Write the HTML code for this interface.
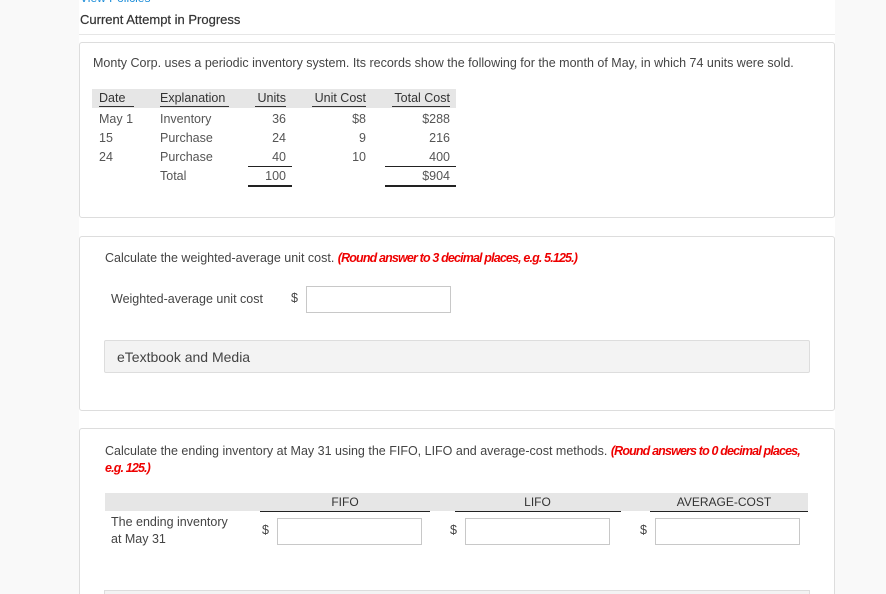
<!DOCTYPE html>
<html><head><style>
html,body{margin:0;width:886px;height:594px;overflow:hidden}
body{background:#f9f9f9;font-family:"Liberation Sans",sans-serif;color:#333;position:relative}
.a{position:absolute;white-space:nowrap}
.main{position:absolute;left:79px;top:0;width:756px;height:594px;background:#fff}
.box{position:absolute;border:1px solid #ddd;border-radius:3px;background:#fff}
.t12{font-size:12.5px;letter-spacing:0}
.t11{font-size:12px;letter-spacing:0}
.red{color:#e00;font-style:italic;font-weight:bold;letter-spacing:-0.85px}
.inp{position:absolute;border:1px solid #c8c8c8;background:#fff}
.r{text-align:right}
.hl{position:absolute;height:2px;background:#222}
</style></head><body>
<div class="main"></div>
<div class="a" style="left:80px;top:-9px;font-size:12px;color:#1a8cd8">View Policies</div>
<div class="a" style="left:80px;top:12px;font-size:13px;color:#333;-webkit-text-stroke:0.2px #333">Current Attempt in Progress</div>
<div class="a" style="left:79px;top:34px;width:756px;height:1px;background:#e6e6e6"></div>

<div class="box" style="left:79px;top:42px;width:754px;height:174px"></div>
<div class="a t12" style="left:93px;top:56px;color:#444">Monty Corp. uses a periodic inventory system. Its records show the following for the month of May, in which 74 units were sold.</div>
<div class="a" style="left:92px;top:89px;width:364px;height:19px;background:#e6e6e6"></div>
<div class="a t12" style="left:99px;top:91px">Date</div>
<div class="a t12" style="left:160px;top:91px">Explanation</div>
<div class="a t12 r" style="left:236px;top:91px;width:50px">Units</div>
<div class="a t12 r" style="left:296px;top:91px;width:70px">Unit Cost</div>
<div class="a t12 r" style="left:376px;top:91px;width:74px">Total Cost</div>
<div class="a" style="left:99px;top:106px;width:35px;height:1px;background:#333"></div>
<div class="a" style="left:160px;top:106px;width:69px;height:1px;background:#333"></div>
<div class="a" style="left:255px;top:106px;width:31px;height:1px;background:#333"></div>
<div class="a" style="left:312px;top:106px;width:54px;height:1px;background:#333"></div>
<div class="a" style="left:392px;top:106px;width:58px;height:1px;background:#333"></div>
<div class="a t12" style="left:99px;top:110px;line-height:19px;color:#555">May 1<br>15<br>24</div>
<div class="a t12" style="left:160px;top:110px;line-height:19px;color:#555">Inventory<br>Purchase<br>Purchase</div>
<div class="a t12 r" style="left:236px;top:110px;width:50px;line-height:19px;color:#555">36<br>24<br>40</div>
<div class="a t12 r" style="left:296px;top:110px;width:70px;line-height:19px;color:#555">$8<br>9<br>10</div>
<div class="a t12 r" style="left:376px;top:110px;width:74px;line-height:19px;color:#555">$288<br>216<br>400</div>
<div class="a" style="left:248px;top:166px;width:44px;height:1px;background:#222"></div>
<div class="a" style="left:385px;top:166px;width:71px;height:1px;background:#222"></div>
<div class="a t12" style="left:160px;top:169px;color:#555">Total</div>
<div class="a t12 r" style="left:236px;top:169px;width:50px;color:#555">100</div>
<div class="a t12 r" style="left:376px;top:169px;width:74px;color:#555">$904</div>
<div class="hl" style="left:248px;top:185px;width:44px"></div>
<div class="hl" style="left:385px;top:185px;width:71px"></div>

<div class="box" style="left:79px;top:236px;width:754px;height:173px"></div>
<div class="a t12" style="left:105px;top:251px;color:#444">Calculate the weighted-average unit cost. <span class="red">(Round answer to 3 decimal places, e.g. 5.125.)</span></div>
<div class="a t12" style="left:111px;top:292px;color:#444">Weighted-average unit cost</div>
<div class="a t12" style="left:291px;top:291px;color:#444">$</div>
<div class="inp" style="left:306px;top:286px;width:143px;height:25px"></div>
<div class="a" style="left:104px;top:340px;width:704px;height:31px;background:#f3f3f3;border:1px solid #ddd;border-radius:2px"></div>
<div class="a" style="left:117px;top:349px;font-size:14px;color:#444">eTextbook and Media</div>

<div class="box" style="left:79px;top:428px;width:754px;height:180px"></div>
<div class="a t12" style="left:105px;top:443px;color:#444;line-height:17px">Calculate the ending inventory at May 31 using the FIFO, LIFO and average-cost methods. <span class="red">(Round answers to 0 decimal places,<br>e.g. 125.)</span></div>
<div class="a" style="left:105px;top:493px;width:703px;height:18px;background:#e6e6e6"></div>
<div class="a t11" style="left:260px;top:495px;width:170px;text-align:center">FIFO</div>
<div class="a t11" style="left:455px;top:495px;width:165px;text-align:center">LIFO</div>
<div class="a t11" style="left:640px;top:495px;width:168px;text-align:center">AVERAGE-COST</div>
<div class="a" style="left:260px;top:511px;width:170px;height:1px;background:#222"></div>
<div class="a" style="left:455px;top:511px;width:166px;height:1px;background:#222"></div>
<div class="a" style="left:650px;top:511px;width:158px;height:1px;background:#222"></div>
<div class="a t12" style="left:111px;top:514px;line-height:17px;color:#444">The ending inventory<br>at May 31</div>
<div class="a t12" style="left:262px;top:523px;color:#444">$</div>
<div class="inp" style="left:277px;top:518px;width:143px;height:25px"></div>
<div class="a t12" style="left:450px;top:523px;color:#444">$</div>
<div class="inp" style="left:465px;top:518px;width:143px;height:25px"></div>
<div class="a t12" style="left:640px;top:523px;color:#444">$</div>
<div class="inp" style="left:655px;top:518px;width:143px;height:25px"></div>
<div class="a" style="left:104px;top:590px;width:704px;height:4px;background:#f3f3f3;border:1px solid #ddd;border-bottom:none"></div>
</body></html>
